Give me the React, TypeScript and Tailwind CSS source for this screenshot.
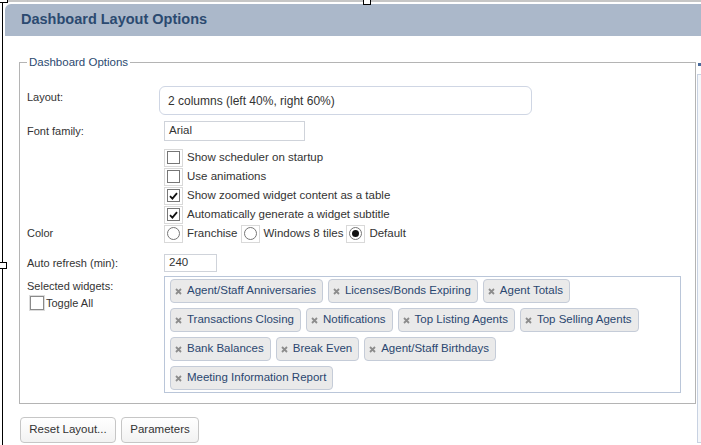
import React from "react";

const Check = ({ checked }: { checked?: boolean }) => (
  <span className="flex h-[18px] w-[19px] shrink-0 items-center justify-center border border-[#d9d9d9]">
    <span className="flex h-[13px] w-[13px] items-center justify-center border border-[#767676] bg-white">
      {checked && (
        <svg width="9" height="8" viewBox="0 0 9 8">
          <path d="M1 4.2 L3.4 6.6 L8 1.2" fill="none" stroke="#111" strokeWidth="1.8" />
        </svg>
      )}
    </span>
  </span>
);

const Radio = ({ checked }: { checked?: boolean }) => (
  <span className="flex h-[18px] w-[19px] shrink-0 items-center justify-center border border-[#d9d9d9]">
    <span className="flex h-[13px] w-[13px] items-center justify-center rounded-full border border-[#767676] bg-white">
      {checked && <span className="h-[7px] w-[7px] rounded-full bg-[#111]" />}
    </span>
  </span>
);

const Tag = ({ label }: { label: string }) => (
  <span className="flex h-[24px] items-center whitespace-nowrap rounded-[4px] border border-[#c5ccd8] bg-[#eaeaea] pl-[4px] pr-[6px] text-[11.5px] text-[#2a4770]">
    <svg width="7" height="7" viewBox="0 0 7 7" className="mr-[5px]">
      <path d="M1 1L6 6M6 1L1 6" stroke="#8c8c8c" strokeWidth="1.8" />
    </svg>
    {label}
  </span>
);

const rows: string[][] = [
  ["Agent/Staff Anniversaries", "Licenses/Bonds Expiring", "Agent Totals"],
  ["Transactions Closing", "Notifications", "Top Listing Agents", "Top Selling Agents"],
  ["Bank Balances", "Break Even", "Agent/Staff Birthdays"],
  ["Meeting Information Report"],
];

const Label = ({ children, className = "" }: { children?: React.ReactNode; className?: string }) => (
  <div className={"w-[137px] shrink-0 text-[11px] text-[#333] " + className}>{children}</div>
);

export default function App() {
  return (
    <div className="relative h-[445px] w-[701px] overflow-hidden bg-white font-['Liberation_Sans',Arial,sans-serif]">
      <div className="ml-[5px] h-[2px] bg-[#c6c6c6]" />
      <div className="ml-[5px] mt-[2px] flex h-[32px] items-center rounded-tl-[6px] bg-[#abb8ca] pl-[16px]">
        <span className="text-[14.5px] font-bold text-[#2b4a70]">Dashboard Layout Options</span>
      </div>

      <div className="relative ml-[19px] mt-[26px] w-[677px] border border-[#b4b4b4] pb-[10px] pl-[7px] pt-[23px]">
        <span className="absolute left-[7px] top-[-8px] bg-white px-[2px] text-[11.5px] leading-[14px] text-[#2b4a70]">
          Dashboard Options
        </span>

        <div className="flex h-[29px]">
          <Label className="pt-[3px]">Layout:</Label>
          <div className="-ml-[5px] flex h-[29px] w-[373px] items-center rounded-[6px] border border-[#cfd6e4] pl-[8px] text-[12px] text-[#333]">
            2 columns (left 40%, right 60%)
          </div>
        </div>

        <div className="mt-[6px] flex h-[20px] items-center">
          <Label>Font family:</Label>
          <div className="flex h-[20px] w-[141px] items-center border border-[#cfd3da] pl-[4px] text-[11.5px] text-[#333]">
            Arial
          </div>
        </div>

        <div className="mt-[7px] flex flex-col">
          {[
            ["Show scheduler on startup", false],
            ["Use animations", false],
            ["Show zoomed widget content as a table", true],
            ["Automatically generate a widget subtitle", true],
          ].map(([t, c]) => (
            <div key={t as string} className="flex h-[19px] items-center">
              <Label />
              <Check checked={c as boolean} />
              <span className="ml-[4px] text-[11.5px] text-[#333]">{t as string}</span>
            </div>
          ))}
          <div className="flex h-[19px] items-center">
            <Label>Color</Label>
            <Radio />
            <span className="ml-[4px] text-[11.5px] text-[#333]">Franchise</span>
            <span className="ml-[3px]" />
            <Radio />
            <span className="ml-[4px] text-[11.5px] text-[#333]">Windows 8 tiles</span>
            <span className="ml-[3px]" />
            <Radio checked />
            <span className="ml-[4px] text-[11.5px] text-[#333]">Default</span>
          </div>
        </div>

        <div className="mt-[11px] flex h-[18px] items-center">
          <Label>Auto refresh (min):</Label>
          <div className="flex h-[18px] w-[53px] items-center border border-[#cfd3da] pl-[4px] text-[11.5px] text-[#333]">
            240
          </div>
        </div>

        <div className="mt-[4px] flex">
          <Label className="pt-[2px]">
            <div>Selected widgets:</div>
            <div className="flex items-center">
              <span className="ml-[3px] h-[14px] w-[14px] border-[1.5px] border-[#8a8a8a] bg-white shadow-[0_0_0_1px_#dcdcdc]" />
              <span className="ml-[2px]">Toggle All</span>
            </div>
          </Label>
          <div className="flex h-[117px] w-[517px] flex-col gap-[5px] border border-[#bac6d9] pl-[5px] pt-[2px]">
            {rows.map((r, i) => (
              <div key={i} className="flex gap-[5px]">
                {r.map((w) => (
                  <Tag key={w} label={w} />
                ))}
              </div>
            ))}
          </div>
        </div>
      </div>

      <div className="ml-[20px] mt-[13px] flex gap-[5px]">
        <button className="h-[26px] w-[96px] rounded-[4px] border border-[#c6c6c6] bg-gradient-to-b from-white to-[#f2f2f2] text-[11.5px] text-[#333]">
          Reset Layout...
        </button>
        <button className="h-[26px] w-[78px] rounded-[4px] border border-[#c6c6c6] bg-gradient-to-b from-white to-[#f2f2f2] text-[11.5px] text-[#333]">
          Parameters
        </button>
      </div>

      {/* right edge of neighbouring panel */}
      <div className="absolute left-[698px] top-[63px] h-[3px] w-[4px] bg-[#4a6a9a]" />
      <div className="absolute left-[697px] top-[74px] h-[369px] w-[12px] border border-[#c8d2e2] bg-[#f5f7fa]" />

      {/* selection frame and handles */}
      <div className="absolute left-[2px] top-0 h-full w-[1px] bg-black" />
      <div className="absolute left-[-2px] top-[-5px] h-[8px] w-[10px] border border-black bg-white" />
      <div className="absolute left-[363px] top-[-4px] h-[9px] w-[8px] border border-black bg-white" />
      <div className="absolute left-[-1px] top-[262px] h-[7px] w-[8px] border border-black bg-white" />
    </div>
  );
}
